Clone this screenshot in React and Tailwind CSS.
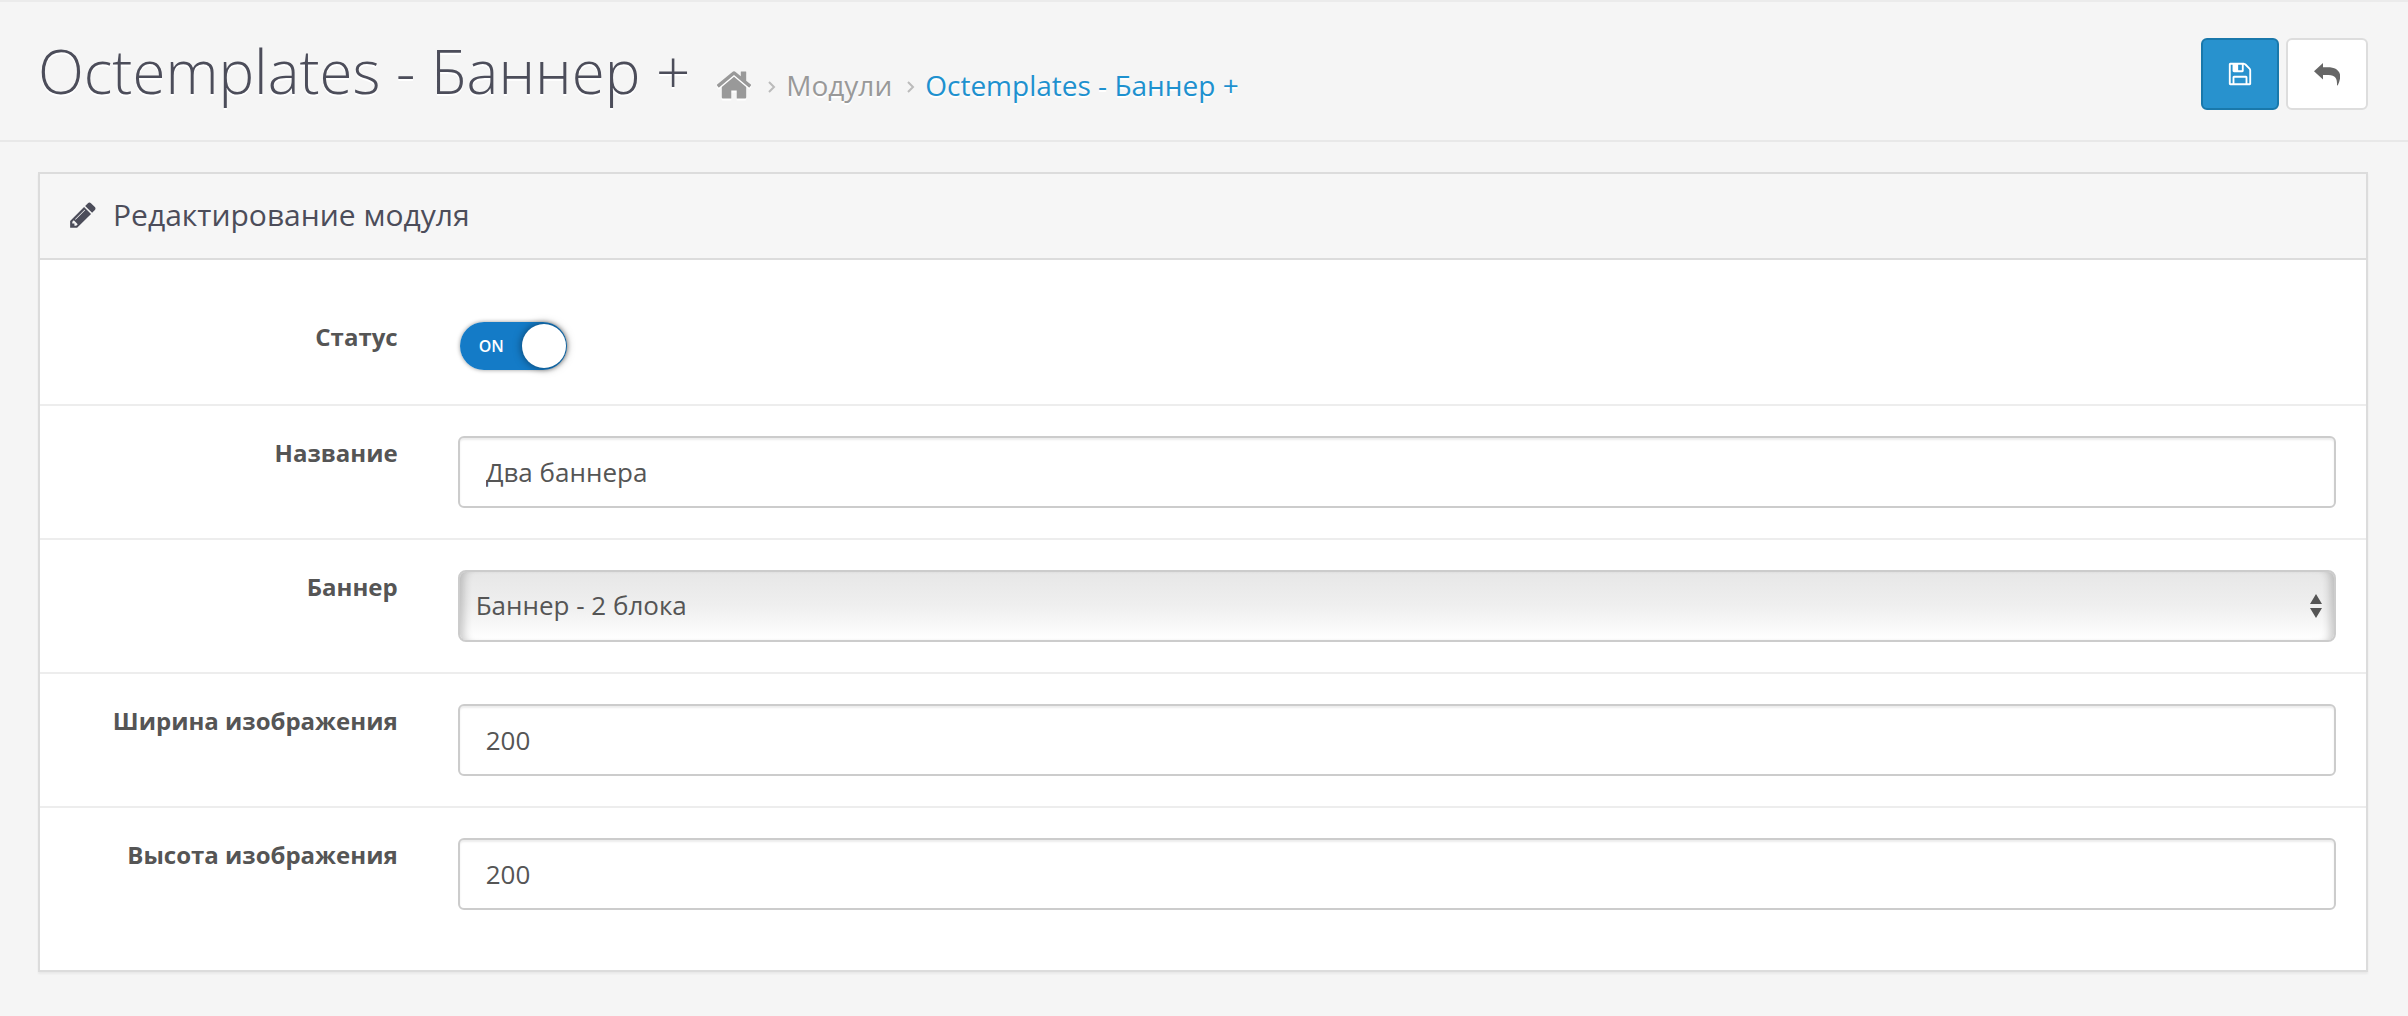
import React, { useState } from 'react';

function Icon({ path, className }) {
  return (
    <svg viewBox="0 0 1792 1792" fill="currentColor" aria-hidden="true" className={className}>
      <path d={path} />
    </svg>
  );
}

const icons = {
  home: 'M1472 992v480q0 26-19 45t-45 19h-384v-384h-256v384h-384q-26 0-45-19t-19-45v-480q0-1 .5-3t.5-3l575-474 575 474q1 2 1 6zm223-69l-62 74q-8 9-21 11h-3q-13 0-21-7l-692-577-692 577q-12 8-24 7-13-2-21-11l-62-74q-8-10-7-23.5t11-21.5l719-599q32-26 76-26t76 26l244 204v-195q0-14 9-23t23-9h192q14 0 23 9t9 23v408l219 182q10 8 11 21.5t-7 23.5z',
  save: 'M512 1536h768v-384h-768v384zm896 0h128v-896q0-14-10-38.5t-20-34.5l-281-281q-10-10-34-20t-39-10v416q0 40-28 68t-68 28h-576q-40 0-68-28t-28-68v-416h-128v1280h128v-416q0-40 28-68t68-28h832q40 0 68 28t28 68v416zm-384-928v-320q0-13-9.5-22.5t-22.5-9.5h-192q-13 0-22.5 9.5t-9.5 22.5v320q0 13 9.5 22.5t22.5 9.5h192q13 0 22.5-9.5t9.5-22.5zm640 32v928q0 40-28 68t-68 28h-1344q-40 0-68-28t-28-68v-1344q0-40 28-68t68-28h928q40 0 88 20t76 48l280 280q28 28 48 76t20 88z',
  pencil: 'M491 1536l91-91-235-235-91 91v107h128v128h107zm523-928q0-22-22-22-10 0-17 7l-542 542q-7 7-7 17 0 22 22 22 10 0 17-7l542-542q7-7 7-17zm-54-192l416 416-832 832h-416v-416zm683 96q0 53-37 90l-166 166-416-416 166-165q36-38 90-38 53 0 91 38l235 234q37 39 37 91z',
};

const inputClass =
  'block h-[72px] w-full rounded-md border-2 border-[#ccc] bg-white px-[26px] text-[26px] text-[#555] shadow-[inset_0_2px_2px_rgba(0,0,0,0.075)] outline-none';

function Separator() {
  return (
    <svg
      viewBox="0 0 8 12"
      fill="none"
      stroke="#bbb"
      strokeWidth="2"
      aria-hidden="true"
      className="mt-1 mr-2.5 ml-[15px] h-3 w-2"
    >
      <path d="M1 1l5 5-5 5" />
    </svg>
  );
}

function Row({ id, label, children }) {
  return (
    <div className="flex items-start border-t-2 border-[#ededed] py-[30px] first:border-t-0">
      <label htmlFor={id} className="w-1/6 pr-[30px] text-right text-2xl leading-[34px] font-bold text-[#555]">
        {label}
      </label>
      <div className="flex-1 px-[30px]">{children}</div>
    </div>
  );
}

function Toggle({ id, checked, onChange }) {
  return (
    <div className="h-[54px] px-0.5 pt-0.5">
      <div className="relative h-12 w-[107px] rounded-full shadow-[0_0_4px_rgba(0,0,0,0.4)]">
        <input
          id={id}
          type="checkbox"
          checked={checked}
          onChange={(e) => onChange(e.target.checked)}
          className="block h-12 w-full cursor-pointer appearance-none rounded-full bg-gray-300 checked:bg-[#147bc7]"
        />
        <span className="pointer-events-none absolute top-0 left-[19px] text-base leading-[48px] font-semibold text-white">
          {checked ? 'ON' : 'OFF'}
        </span>
        <span className="pointer-events-none absolute top-0.5 right-px size-11 rounded-full bg-white shadow-[0_0_8px_rgba(0,0,0,0.5)]" />
      </div>
    </div>
  );
}

export default function App() {
  const [status, setStatus] = useState(true);
  const [name, setName] = useState('Два баннера');
  const [width, setWidth] = useState('200');
  const [height, setHeight] = useState('200');

  return (
    <div className="min-h-screen border-t-2 border-[#ebebeb] bg-[#f5f5f5] font-['Open_Sans',sans-serif] text-[#4c4d5a]">
      <header className="flex items-start justify-between border-b-2 border-[#e8e8e8] pt-9 pr-10 pb-[30px] pl-[38px]">
        <div className="flex items-end gap-[25px] [text-shadow:0_2px_#fff]">
          <h1 className="text-[60px] leading-[66px] font-light">Octemplates - Баннер +</h1>
          <nav className="flex items-center text-[28px] leading-9 text-[#999]">
            <a href="#home" aria-label="Главная">
              <Icon path={icons.home} className="size-[38px] drop-shadow-[0_2px_0_#fff]" />
            </a>
            <Separator />
            <a href="#modules">Модули</a>
            <Separator />
            <a href="#banner" className="text-[#1e91cf]">Octemplates - Баннер +</a>
          </nav>
        </div>
        <div className="flex gap-[7px]">
          <button
            type="submit"
            form="form-module"
            aria-label="Сохранить"
            className="flex h-[72px] w-[78px] items-center justify-center rounded-md border-2 border-[#1978ab] bg-[#2892ce] text-white"
          >
            <Icon path={icons.save} className="size-[26px]" />
          </button>
          <a
            href="#back"
            aria-label="Назад"
            className="flex h-[72px] w-[82px] items-center justify-center rounded-md border-2 border-[#ddd] bg-white text-[#666]"
          >
            <svg viewBox="0 0 26 24" fill="currentColor" aria-hidden="true" className="h-6 w-[26px]">
              <path d="M9 .9v4.300h4.500C21.500 5.200 26.200 8.500 26.200 14.500c0 3-1 5.800-2.400 8.800-.2.400-.8.300-.8-.2.200-6-1.200-10-8.500-10H9v4.300L0 9.200z" />
            </svg>
          </a>
        </div>
      </header>

      <main className="px-[38px] pt-[30px]">
        <section className="mr-0.5 border-2 border-[#dcdcdc] bg-white shadow-[0_2px_2px_rgba(0,0,0,0.05)]">
          <div className="flex h-[86px] items-center gap-[15px] border-b-2 border-[#dcdcdc] bg-[#f6f6f6] px-7 pb-0.5">
            <Icon path={icons.pencil} className="size-[30px]" />
            <h2 className="text-[30px] leading-9">Редактирование модуля</h2>
          </div>
          <form id="form-module" onSubmit={(e) => e.preventDefault()} className="py-[30px]">
            <Row id="status" label="Статус">
              <Toggle id="status" checked={status} onChange={setStatus} />
            </Row>
            <Row id="name" label="Название">
              <input id="name" type="text" value={name} onChange={(e) => setName(e.target.value)} className={inputClass} />
            </Row>
            <Row id="banner" label="Баннер">
              <div className="relative">
                <select
                  id="banner"
                  className="block h-[72px] w-full appearance-none rounded-lg border-2 border-[#ccc] bg-linear-to-b from-[#e7e7e7] via-[#efefef] to-white px-4 pb-0.5 text-[26px] text-[#555] shadow-[inset_10px_0_8px_-6px_rgba(0,0,0,0.2),inset_-10px_0_8px_-6px_rgba(0,0,0,0.2)] outline-none"
                >
                  <option>Баннер - 2 блока</option>
                </select>
                <svg viewBox="0 0 12 24" fill="#555" className="pointer-events-none absolute top-6 right-3.5 h-6 w-3">
                  <path d="M6 0l6 10H0zM0 14h12L6 24z" />
                </svg>
              </div>
            </Row>
            <Row id="width" label="Ширина изображения">
              <input id="width" type="text" value={width} onChange={(e) => setWidth(e.target.value)} className={inputClass} />
            </Row>
            <Row id="height" label="Высота изображения">
              <input id="height" type="text" value={height} onChange={(e) => setHeight(e.target.value)} className={inputClass} />
            </Row>
          </form>
        </section>
      </main>
    </div>
  );
}
